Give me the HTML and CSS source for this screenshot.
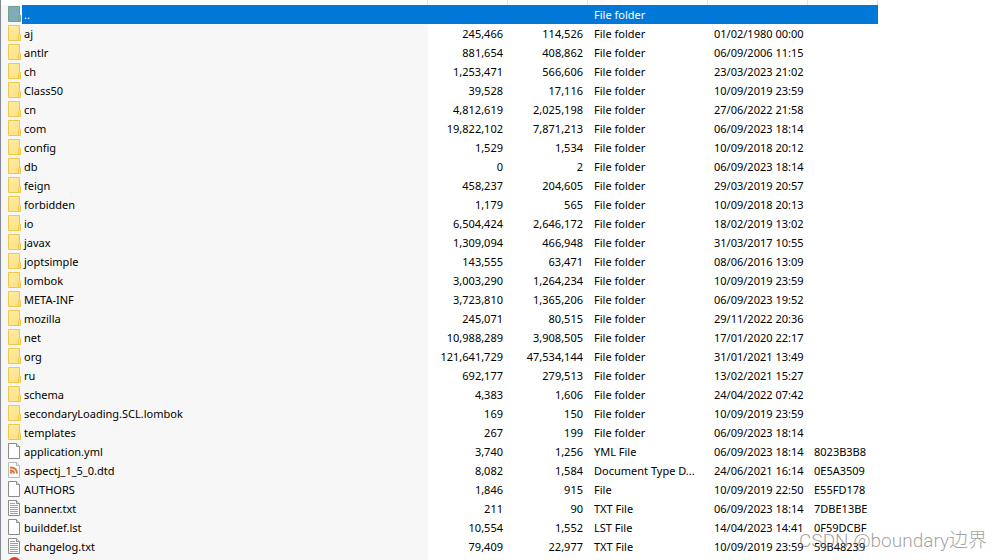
FILE: index.html
```html
<!DOCTYPE html>
<html lang="en">
<head>
  <meta charset="UTF-8">
  <title>Archive contents</title>
  <link rel="stylesheet" href="styles.css">
</head>
<body>

  <!-- Icons shared by the rows -->
  <svg class="sprite" aria-hidden="true">
    <linearGradient id="folderFill" x1="0" y1="0" x2="1" y2="1">
      <stop offset="0" stop-color="#ffeda8"/>
      <stop offset="1" stop-color="#fddf7c"/>
    </linearGradient>
    <symbol id="folder" viewBox="0 0 13 16">
      <path d="M.5 .5h11v9h1v6H.5z" fill="url(#folderFill)" stroke="#efc84a"/>
      <path d="M10.5 15V10.5l1-1" fill="none" stroke="#efc84a"/>
    </symbol>
    <symbol id="folder-up" viewBox="0 0 13 16">
      <path d="M.5 .5h11v9h1v6H.5z" fill="#7fadb7" stroke="#71a08d"/>
      <path d="M10.5 15V10.5l1-1" fill="none" stroke="#71a08d"/>
    </symbol>
    <symbol id="file" viewBox="0 0 13 16">
      <path d="M.5 .5h8l3 3v12H.5z" fill="#fdfdfd" stroke="#8c8c8c"/>
      <path d="M8.5 .5v3h3" fill="#e8e8e8" stroke="#8c8c8c"/>
    </symbol>
    <symbol id="text" viewBox="0 0 13 16">
      <path d="M.5 .5h8l3 3v12H.5z" fill="#fdfdfd" stroke="#8c8c8c"/>
      <path d="M8.5 .5v3h3" fill="#e8e8e8" stroke="#8c8c8c"/>
      <path d="M2 3.5h5M2 5.5h8M2 7.5h8M2 9.5h8M2 11.5h8M2 13.5h8" stroke="#a3a3a3"/>
    </symbol>
    <symbol id="feed" viewBox="0 0 13 16">
      <path d="M.5 .5h8l3 3v12H.5z" fill="#fafafa" stroke="#b9b9b9"/>
      <path d="M8.5 .5v3h3" fill="#e8e8e8" stroke="#b9b9b9"/>
      <path d="M2 5.5q7 0 7 6M2 8.5q4 0 4 3" fill="none" stroke="#d9743c" stroke-width="2"/>
      <circle cx="3" cy="10.7" r="1.1" fill="#d9743c"/>
    </symbol>
    <symbol id="red" viewBox="0 0 13 16">
      <circle cx="6.5" cy="6.5" r="6.5" fill="#e23e32"/>
    </symbol>
  </svg>

  <main class="file-list">
    <table>
      <colgroup>
        <col class="col-name">
        <col class="col-size">
        <col class="col-size">
        <col class="col-type">
        <col class="col-date">
        <col class="col-crc">
      </colgroup>
      <thead>
        <tr><th></th><th></th><th></th><th></th><th></th><th></th></tr>
      </thead>
      <tbody>
        <tr class="selected"><td><svg class="icon"><use href="#folder-up"/></svg><span>..</span></td><td></td><td></td><td>File folder</td><td></td><td></td></tr>
        <tr><td><svg class="icon"><use href="#folder"/></svg><span>aj</span></td><td>245,466</td><td>114,526</td><td>File folder</td><td>01/02/1980 00:00</td><td></td></tr>
        <tr><td><svg class="icon"><use href="#folder"/></svg><span>antlr</span></td><td>881,654</td><td>408,862</td><td>File folder</td><td>06/09/2006 11:15</td><td></td></tr>
        <tr><td><svg class="icon"><use href="#folder"/></svg><span>ch</span></td><td>1,253,471</td><td>566,606</td><td>File folder</td><td>23/03/2023 21:02</td><td></td></tr>
        <tr><td><svg class="icon"><use href="#folder"/></svg><span>Class50</span></td><td>39,528</td><td>17,116</td><td>File folder</td><td>10/09/2019 23:59</td><td></td></tr>
        <tr><td><svg class="icon"><use href="#folder"/></svg><span>cn</span></td><td>4,812,619</td><td>2,025,198</td><td>File folder</td><td>27/06/2022 21:58</td><td></td></tr>
        <tr><td><svg class="icon"><use href="#folder"/></svg><span>com</span></td><td>19,822,102</td><td>7,871,213</td><td>File folder</td><td>06/09/2023 18:14</td><td></td></tr>
        <tr><td><svg class="icon"><use href="#folder"/></svg><span>config</span></td><td>1,529</td><td>1,534</td><td>File folder</td><td>10/09/2018 20:12</td><td></td></tr>
        <tr><td><svg class="icon"><use href="#folder"/></svg><span>db</span></td><td>0</td><td>2</td><td>File folder</td><td>06/09/2023 18:14</td><td></td></tr>
        <tr><td><svg class="icon"><use href="#folder"/></svg><span>feign</span></td><td>458,237</td><td>204,605</td><td>File folder</td><td>29/03/2019 20:57</td><td></td></tr>
        <tr><td><svg class="icon"><use href="#folder"/></svg><span>forbidden</span></td><td>1,179</td><td>565</td><td>File folder</td><td>10/09/2018 20:13</td><td></td></tr>
        <tr><td><svg class="icon"><use href="#folder"/></svg><span>io</span></td><td>6,504,424</td><td>2,646,172</td><td>File folder</td><td>18/02/2019 13:02</td><td></td></tr>
        <tr><td><svg class="icon"><use href="#folder"/></svg><span>javax</span></td><td>1,309,094</td><td>466,948</td><td>File folder</td><td>31/03/2017 10:55</td><td></td></tr>
        <tr><td><svg class="icon"><use href="#folder"/></svg><span>joptsimple</span></td><td>143,555</td><td>63,471</td><td>File folder</td><td>08/06/2016 13:09</td><td></td></tr>
        <tr><td><svg class="icon"><use href="#folder"/></svg><span>lombok</span></td><td>3,003,290</td><td>1,264,234</td><td>File folder</td><td>10/09/2019 23:59</td><td></td></tr>
        <tr><td><svg class="icon"><use href="#folder"/></svg><span>META-INF</span></td><td>3,723,810</td><td>1,365,206</td><td>File folder</td><td>06/09/2023 19:52</td><td></td></tr>
        <tr><td><svg class="icon"><use href="#folder"/></svg><span>mozilla</span></td><td>245,071</td><td>80,515</td><td>File folder</td><td>29/11/2022 20:36</td><td></td></tr>
        <tr><td><svg class="icon"><use href="#folder"/></svg><span>net</span></td><td>10,988,289</td><td>3,908,505</td><td>File folder</td><td>17/01/2020 22:17</td><td></td></tr>
        <tr><td><svg class="icon"><use href="#folder"/></svg><span>org</span></td><td>121,641,729</td><td>47,534,144</td><td>File folder</td><td>31/01/2021 13:49</td><td></td></tr>
        <tr><td><svg class="icon"><use href="#folder"/></svg><span>ru</span></td><td>692,177</td><td>279,513</td><td>File folder</td><td>13/02/2021 15:27</td><td></td></tr>
        <tr><td><svg class="icon"><use href="#folder"/></svg><span>schema</span></td><td>4,383</td><td>1,606</td><td>File folder</td><td>24/04/2022 07:42</td><td></td></tr>
        <tr><td><svg class="icon"><use href="#folder"/></svg><span>secondaryLoading.SCL.lombok</span></td><td>169</td><td>150</td><td>File folder</td><td>10/09/2019 23:59</td><td></td></tr>
        <tr><td><svg class="icon"><use href="#folder"/></svg><span>templates</span></td><td>267</td><td>199</td><td>File folder</td><td>06/09/2023 18:14</td><td></td></tr>
        <tr><td><svg class="icon"><use href="#file"/></svg><span>application.yml</span></td><td>3,740</td><td>1,256</td><td>YML File</td><td>06/09/2023 18:14</td><td>8023B3B8</td></tr>
        <tr><td><svg class="icon"><use href="#feed"/></svg><span>aspectj_1_5_0.dtd</span></td><td>8,082</td><td>1,584</td><td>Document Type D...</td><td>24/06/2021 16:14</td><td>0E5A3509</td></tr>
        <tr><td><svg class="icon"><use href="#file"/></svg><span>AUTHORS</span></td><td>1,846</td><td>915</td><td>File</td><td>10/09/2019 22:50</td><td>E55FD178</td></tr>
        <tr><td><svg class="icon"><use href="#text"/></svg><span>banner.txt</span></td><td>211</td><td>90</td><td>TXT File</td><td>06/09/2023 18:14</td><td>7DBE13BE</td></tr>
        <tr><td><svg class="icon"><use href="#file"/></svg><span>builddef.lst</span></td><td>10,554</td><td>1,552</td><td>LST File</td><td>14/04/2023 14:41</td><td>0F59DCBF</td></tr>
        <tr><td><svg class="icon"><use href="#text"/></svg><span>changelog.txt</span></td><td>79,409</td><td>22,977</td><td>TXT File</td><td>10/09/2019 23:59</td><td>59B48239</td></tr>
        <tr><td><svg class="icon"><use href="#red"/></svg></td><td></td><td></td><td></td><td></td><td></td></tr>
      </tbody>
    </table>
  </main>

  <div class="watermark">CSDN @boundary边界</div>

</body>
</html>
```
FILE: styles.css
```css
body {
  margin: 0;
  height: 100vh;
  overflow: hidden;
  position: relative;
  background: #fff;
  color: #000;
  font-family: "Noto Sans", "Open Sans", sans-serif;
  font-size: 11px;
}

.sprite {
  position: absolute;
  width: 0;
  height: 0;
}

.file-list {
  min-height: 100vh;
  border-left: 1px solid #828790;
}

table {
  width: 877px;
  table-layout: fixed;
  border-collapse: collapse;
}

.col-name { width: 427px; }
.col-size { width: 80px; }
.col-type { width: 120px; }
.col-date { width: 100px; }
.col-crc { width: 70px; }

/* Bottom edge of the column headers */
th {
  height: 5px;
  padding: 0;
  background: linear-gradient(#e5e5e5, #e5e5e5) right / 1px 100% no-repeat;
}

td {
  height: 19px;
  padding: 0 6px;
  line-height: 19px;
  white-space: nowrap;
}

td:first-child {
  display: flex;
  align-items: flex-start;
  padding: 0 0 0 7px;
  background: #f7f7f7;
}

td:first-child span {
  flex: 1;
  margin-left: 1px;
  padding-left: 2px;
}

td:nth-child(2),
td:nth-child(3) {
  padding-right: 5px;
  text-align: right;
}

.selected td:not(:first-child),
.selected span {
  background: #0078d7;
  color: #fff;
}

.icon {
  width: 13px;
  height: 16px;
  margin-top: 1px;
}

.watermark {
  position: absolute;
  right: 14px;
  bottom: 5px;
  color: rgba(120, 120, 120, 0.7);
  font-family: Roboto, "Noto Sans CJK SC", sans-serif;
  font-size: 19px;
  font-weight: 300;
  line-height: 28px;
}
```
